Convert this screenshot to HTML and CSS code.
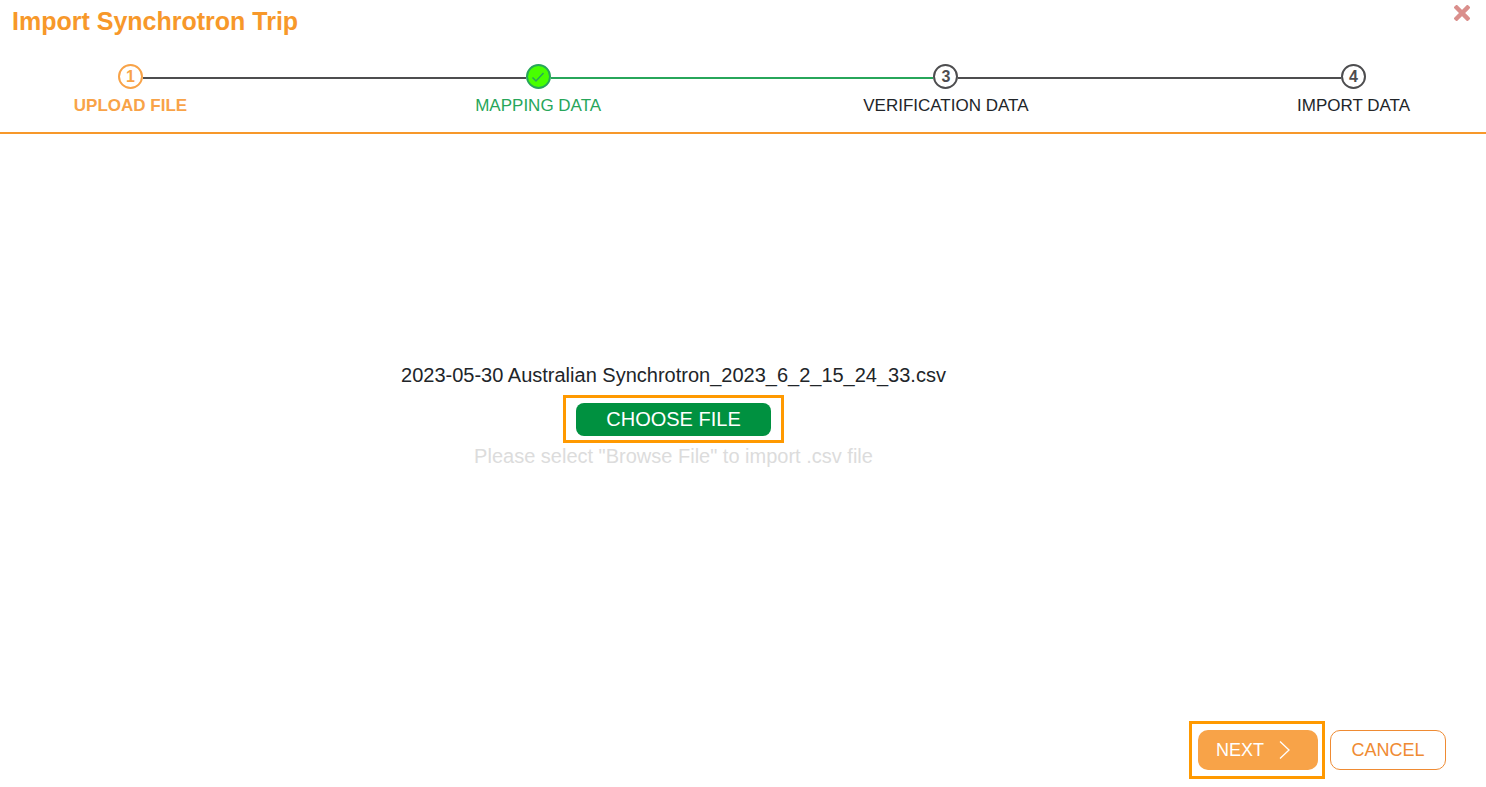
FILE: index.html
```html
<!DOCTYPE html>
<html lang="en">
<head>
    <meta charset="UTF-8">
    <meta name="viewport" content="width=device-width, initial-scale=1.0">
    <title>Import Synchrotron Trip</title>
    <link rel="stylesheet" href="styles.css">
</head>
<body>
    <header class="header">
        <div class="title-bar">
            <h1>Import Synchrotron Trip</h1>
            <button class="close" type="button" aria-label="Close">
                <svg width="16" height="16" viewBox="0 0 16 16">
                    <path d="M2.6 2.6L13.4 13.4M13.4 2.6L2.6 13.4" stroke="#da8f8c" stroke-width="4.4" stroke-linecap="square" stroke-linejoin="round"/>
                </svg>
            </button>
        </div>
        <ol class="steps">
            <li class="step active">
                <span class="circle">1</span>
                <span class="label">UPLOAD FILE</span>
            </li>
            <li class="line" aria-hidden="true"></li>
            <li class="step done">
                <span class="circle">
                    <svg width="14" height="12" viewBox="0 0 14 12">
                        <path d="M1.5 6.5L5 10L12.5 2" fill="none" stroke="#27a65a" stroke-width="1.5"/>
                    </svg>
                </span>
                <span class="label">MAPPING DATA</span>
            </li>
            <li class="line done" aria-hidden="true"></li>
            <li class="step">
                <span class="circle">3</span>
                <span class="label">VERIFICATION DATA</span>
            </li>
            <li class="line" aria-hidden="true"></li>
            <li class="step">
                <span class="circle">4</span>
                <span class="label">IMPORT DATA</span>
            </li>
        </ol>
    </header>
    <main class="upload">
        <p class="file-name">2023-05-30 Australian Synchrotron_2023_6_2_15_24_33.csv</p>
        <div class="highlight choose">
            <button class="btn-choose" type="button">CHOOSE FILE</button>
        </div>
        <p class="hint">Please select "Browse File" to import .csv file</p>
    </main>
    <footer class="footer">
        <div class="highlight next">
            <button class="btn btn-next" type="button">
                NEXT
                <svg width="12" height="20" viewBox="0 0 12 20">
                    <path d="M1 1.5L10 10L1 18.5" fill="none" stroke="#fff" stroke-width="1.3"/>
                </svg>
            </button>
        </div>
        <button class="btn btn-cancel" type="button">CANCEL</button>
    </footer>
</body>
</html>
```
FILE: styles.css
```css
*{
    box-sizing: border-box;
}
body{
    display: flex;
    flex-direction: column;
    min-height: 100vh;
    margin: 0;
    font-family: "Liberation Sans", Arial, sans-serif;
    color: #212529;
    background-color: white;
}
h1,p,ol{
    margin: 0;
    padding: 0;
}
button{
    font-family: inherit;
    cursor: pointer;
}

.header{
    border-bottom: 2px solid #f7982a;
}
.title-bar{
    display: flex;
    justify-content: space-between;
    align-items: flex-start;
    height: 64px;
    padding: 5px 16px 0 12px;
}
.title-bar h1{
    font-size: 25px;
    line-height: 32px;
    color: #f7982a;
}
.close{
    display: flex;
    padding: 0;
    border: none;
    background: none;
}

.steps{
    display: flex;
    padding: 0 120px 16px 118px;
    list-style: none;
}
/* the labels are wider than the step and spill over on both sides */
.step{
    display: flex;
    flex-direction: column;
    align-items: center;
    gap: 6px;
    width: 25px;
}
.circle{
    display: flex;
    justify-content: center;
    align-items: center;
    width: 25px;
    height: 25px;
    border: 2px solid #4d4d4f;
    border-radius: 50%;
    font-size: 16px;
    font-weight: bold;
    color: #4d4d4f;
}
.label{
    font-size: 17px;
    line-height: 21px;
    white-space: nowrap;
}
.line{
    flex: 1;
    height: 2px;
    margin-top: 13px;
    background-color: #4d4d4f;
}
.line.done{
    background-color: #27a65a;
}
.step.active .circle{
    border-color: #f8a348;
    color: #f8a348;
}
.step.active .label{
    font-weight: bold;
    color: #f8a348;
}
.step.done .circle{
    border-color: #27a65a;
    background-color: #48ff00;
}
.step.done .label{
    color: #27a65a;
}

.upload{
    flex: 1;
    display: flex;
    flex-direction: column;
    justify-content: center;
    align-items: center;
    padding: 0 139px 25px 0;
    font-size: 20px;
    line-height: 26px;
}
.highlight{
    border: 3px solid #ff9900;
}
.choose{
    margin-top: 7px;
    padding: 5px 10px 4px;
}
.btn-choose{
    display: block;
    width: 195px;
    height: 33px;
    padding: 0;
    border: none;
    border-radius: 8px;
    background-color: #009140;
    font-size: 20px;
    color: white;
}
.hint{
    color: #dcdcdc;
}

.footer{
    display: flex;
    justify-content: flex-end;
    align-items: center;
    gap: 5px;
    padding: 0 40px 8px;
}
.next{
    padding: 6px 4px 6px 6px;
}
.btn{
    display: flex;
    align-items: center;
    height: 40px;
    border-radius: 10px;
    font-size: 18px;
}
.btn-next{
    gap: 15px;
    width: 120px;
    padding: 0 18px;
    border: none;
    background-color: #f8a348;
    color: white;
}
.btn-cancel{
    justify-content: center;
    width: 116px;
    padding: 0;
    border: 1px solid #ef8b33;
    background-color: white;
    color: #ef8b33;
}
```
